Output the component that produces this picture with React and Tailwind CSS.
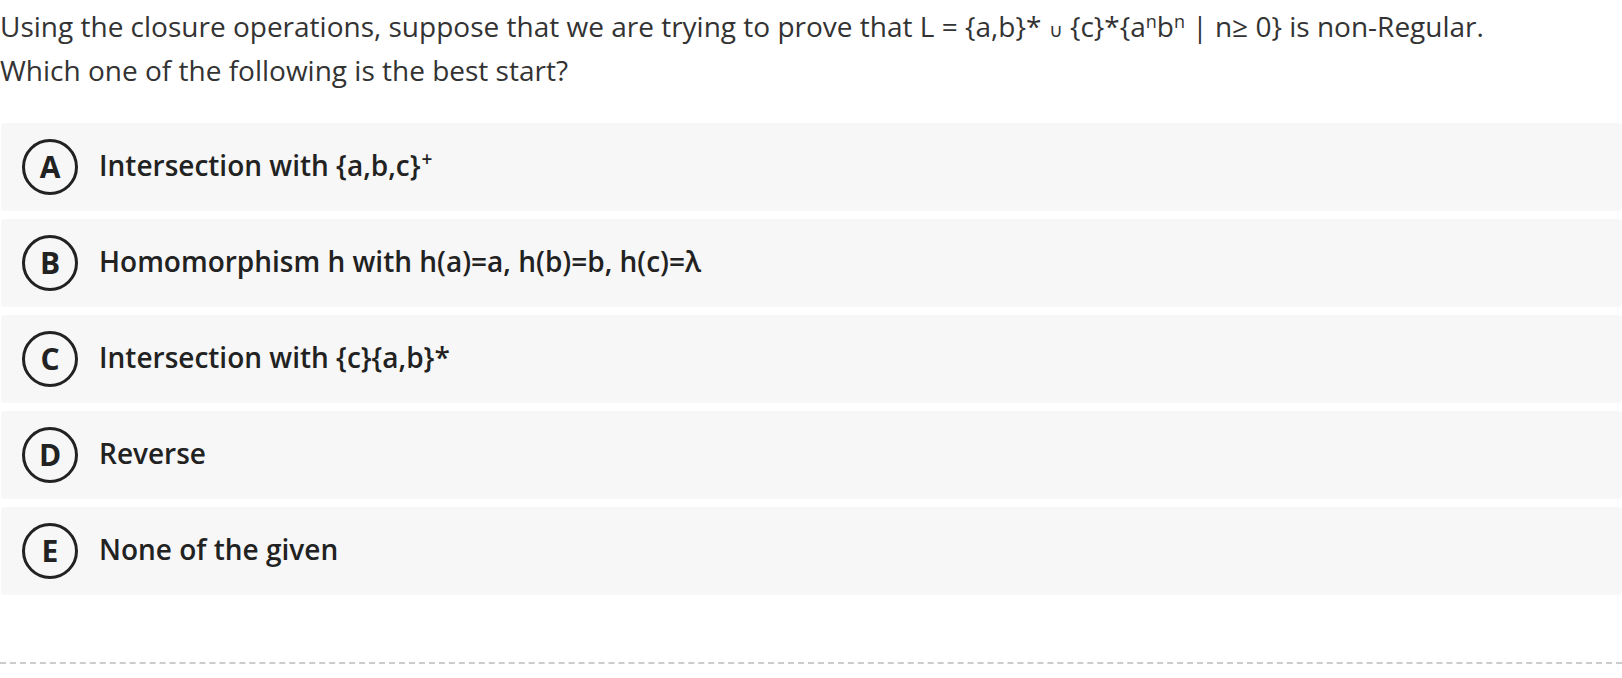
import React from "react";

const options = [
  { letter: "A", content: <>Intersection with {"{a,b,c}"}<sup className="text-[19px] relative -top-[10px] ml-[1px]">+</sup></> },
  { letter: "B", content: <>Homomorphism h with h(a)=a, h(b)=b, h(c)=λ</> },
  { letter: "C", content: <>Intersection with {"{c}{a,b}*"}</> },
  { letter: "D", content: <>Reverse</> },
  { letter: "E", content: <>None of the given</> },
];

export default function App() {
  return (
    <div className="w-[1622px] h-[678px] bg-white text-[#262626] overflow-hidden" style={{ fontFamily: '"Open Sans", sans-serif' }}>
      <div className="pt-[4px] text-[28px] leading-[44px] text-[#333]">
        <p className="h-[44px] whitespace-nowrap">
          Using the closure operations, suppose that we are trying to prove that L = {"{a,b}*"} <span className="text-[19px] leading-none">∪</span> {"{c}*{a"}<sup className="text-[18px]">n</sup>b<sup className="text-[18px]">n</sup> | n<span className="leading-none">≥</span> 0{"}"} is non-Regular.
        </p>
        <p className="h-[44px]">Which one of the following is the best start?</p>
      </div>
      <div className="mt-[31px] flex flex-col gap-[8px] pl-[1px]">
        {options.map((o) => (
          <div key={o.letter} className="h-[88px] bg-[#f7f7f7] rounded-[4px] flex items-center pl-[21px]">
            <div className="w-[56px] h-[56px] shrink-0 rounded-full border-[3px] border-[#222] flex items-center justify-center text-[30px] leading-none font-bold text-[#222]">
              {o.letter}
            </div>
            <div className="ml-[21px] -mt-[4px] text-[28px] font-semibold text-[#222]">{o.content}</div>
          </div>
        ))}
      </div>
      <div className="mt-[67px] border-t-2 border-dashed border-[#cccccc]" />
    </div>
  );
}
